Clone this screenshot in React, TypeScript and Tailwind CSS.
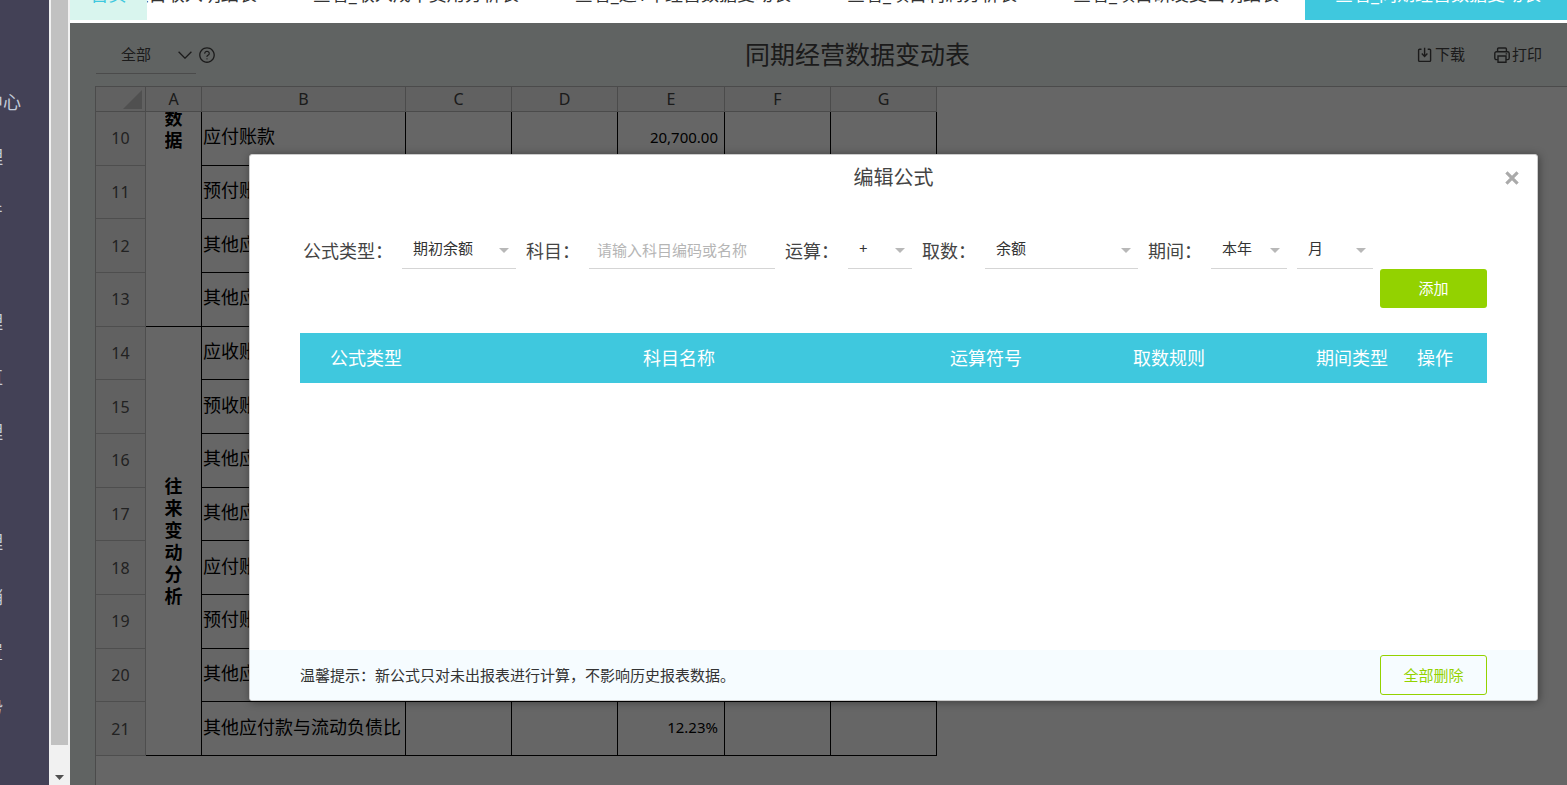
import { useState } from 'react';
import { AiOutlineQuestionCircle } from 'react-icons/ai';

const menuItems = ['中心', '理', '产', '', '理', '直', '理', '', '理', '销', '置', '势'];

const tabs = [
  '查看_项目收入明细表',
  '查看_收入成本费用分析表',
  '查看_近1年经营数据变动表',
  '查看_项目利润分析表',
  '查看_项目研发支出明细表',
  '查看_同期经营数据变动表'
];

const sheetColumns = ['A', 'B', 'C', 'D', 'E', 'F', 'G'];

interface SheetRow {
  no: number;
  label: string;
  value?: string;
}

const sheetRows: SheetRow[] = [
  { no: 10, label: '应付账款', value: '20,700.00' },
  { no: 11, label: '预付账款' },
  { no: 12, label: '其他应收款' },
  { no: 13, label: '其他应付款' },
  { no: 14, label: '应收账款' },
  { no: 15, label: '预收账款' },
  { no: 16, label: '其他应收款' },
  { no: 17, label: '其他应付款' },
  { no: 18, label: '应付账款' },
  { no: 19, label: '预付账款' },
  { no: 20, label: '其他应收款' },
  { no: 21, label: '其他应付款与流动负债比', value: '12.23%' }
];

const formulaColumns = [
  { title: '公式类型', className: 'w-[313px]' },
  { title: '科目名称', className: 'w-[307px]' },
  { title: '运算符号', className: 'w-[183px]' },
  { title: '取数规则', className: 'w-[183px]' },
  { title: '期间类型', className: 'w-[101px]' },
  { title: '操作', className: '' }
];

function DownloadIcon() {
  return (
    <svg className="h-4 w-4" viewBox="0 0 16 16" fill="none" stroke="currentColor" strokeWidth="1.4">
      <path d="M4.5 2.2H2.6a1 1 0 0 0-1 1v10.2a1 1 0 0 0 1 1h10a1 1 0 0 0 1-1V3.2a1 1 0 0 0-1-1h-1.9" />
      <path d="M7.6 0.8v8.6M4.8 6.6l2.8 2.8 2.8-2.8" />
    </svg>
  );
}

function PrinterIcon() {
  return (
    <svg className="h-4 w-4" viewBox="0 0 16 16" fill="none" stroke="currentColor" strokeWidth="1.4">
      <path d="M3.6 4.6V2a1 1 0 0 1 1-1h6.8a1 1 0 0 1 1 1v2.6" />
      <path d="M3.8 12.6H2.4a1.6 1.6 0 0 1-1.6-1.6V6.4a1.6 1.6 0 0 1 1.6-1.6h11.2a1.6 1.6 0 0 1 1.6 1.6V11a1.6 1.6 0 0 1-1.6 1.6h-1.4" />
      <path d="M4 9h8v6.2H4zM11.6 6.9h1.6" />
    </svg>
  );
}

interface FieldSelectProps {
  id: string;
  label: string;
  hideLabel?: boolean;
  widthClass: string;
  options: string[];
}

function FieldSelect({ id, label, hideLabel, widthClass, options }: FieldSelectProps) {
  const [value, setValue] = useState(options[0]);
  return (
    <div className="flex">
      <label htmlFor={id} className={hideLabel ? 'sr-only' : 'pt-1 pr-[9px] text-[18px] leading-[36px] text-[#444]'}>
        {label}：
      </label>
      <div className={`relative ${widthClass}`}>
        <select
          id={id}
          className="h-10 w-full appearance-none border-b border-[#d5d5d5] bg-transparent pl-[11px] text-[15px] text-[#333] outline-none"
          value={value}
          onChange={(e) => setValue(e.target.value)}
        >
          {options.map((o) => (
            <option key={o}>{o}</option>
          ))}
        </select>
        <svg className="pointer-events-none absolute top-[19px] right-[7px] h-[5px] w-[10px]" viewBox="0 0 10 5">
          <path d="M0 0h10L5 5z" fill="#b8b8b8" />
        </svg>
      </div>
    </div>
  );
}

function Sidebar() {
  return (
    <aside className="flex shrink-0">
      <nav className="w-[49px] overflow-hidden bg-[#434156] pt-[75px]">
        <ul className="-ml-[15px]">
          {menuItems.map((item, i) => (
            <li key={i} className="h-[55px] text-[18px] leading-[55px] whitespace-nowrap text-[#c3cddb]">
              {item && <a href="#">{item}</a>}
            </li>
          ))}
        </ul>
      </nav>
      <div className="flex w-[21px] flex-col items-center bg-[#f1f1f1]">
        <div className="w-[17px] flex-1 bg-[#c1c1c1]" />
        <div className="flex h-10 items-end pb-[5px]">
          <svg className="h-[5px] w-[9px]" viewBox="0 0 9 5">
            <path d="M0 0h9L4.5 5z" fill="#505050" />
          </svg>
        </div>
      </div>
    </aside>
  );
}

function TabBar() {
  return (
    <div className="flex h-[23px] items-end overflow-hidden bg-white pb-[3px] text-[18px]">
      <button type="button" className="h-[51px] w-[77px] shrink-0 bg-[#d9f5ee] text-[#3fc8de]">
        首页
      </button>
      <div className="flex min-w-0 flex-1 justify-end overflow-hidden">
        {tabs.map((tab, i) => (
          <button
            key={tab}
            type="button"
            className={`h-[51px] shrink-0 pr-[26px] pl-[30px] whitespace-nowrap ${
              i === tabs.length - 1 ? 'bg-[#3fc8de] text-white' : 'text-[#333]'
            }`}
          >
            {tab}
          </button>
        ))}
      </div>
    </div>
  );
}

function Toolbar() {
  return (
    <div className="flex h-[63px] shrink-0 items-center pr-[25px] pl-[26px] text-[#444]">
      <div className="relative w-[100px]">
        <select
          aria-label="报表范围"
          className="h-[38px] w-full appearance-none border-b border-[#bbb] bg-transparent pl-[25px] text-[15px] outline-none"
        >
          <option>全部</option>
        </select>
        <svg
          className="pointer-events-none absolute top-[15px] right-[4px] h-2 w-[14px]"
          viewBox="0 0 14 8"
          fill="none"
          stroke="currentColor"
          strokeWidth="1.3"
        >
          <path d="M0.6 0.8 7 7.2l6.4-6.4" />
        </svg>
      </div>
      <AiOutlineQuestionCircle className="ml-[2px] h-[18px] w-[18px]" />
      <h1 className="flex-1 pl-[82px] text-center text-[25px]">同期经营数据变动表</h1>
      <div className="flex gap-[29px] text-[15px]">
        <button type="button" className="flex items-center gap-[2px]">
          <DownloadIcon />
          下载
        </button>
        <button type="button" className="flex items-center gap-[2px]">
          <PrinterIcon />
          打印
        </button>
      </div>
    </div>
  );
}

function Sheet() {
  return (
    <div className="ml-[25px] min-h-0 flex-1 overflow-hidden border-t border-l border-[#bbb] bg-white">
      <table className="h-[669px] w-[841px] table-fixed border-separate border-spacing-0 text-black">
        <colgroup>
          <col className="w-[50px]" />
          <col className="w-[56px]" />
          <col className="w-[204px]" />
          <col className="w-[106px]" />
          <col className="w-[106px]" />
          <col className="w-[107px]" />
          <col className="w-[106px]" />
          <col className="w-[106px]" />
        </colgroup>
        <thead>
          <tr className="h-[25px] bg-[#f2f2f2] text-[16px] leading-[24px] text-[#444]">
            <th className="border-r border-b border-[#bbb] p-0">
              <svg className="mr-[3px] ml-auto h-[19px] w-[19px]" viewBox="0 0 19 19">
                <path d="M19 0v19H0z" fill="#c8c8c8" />
              </svg>
            </th>
            {sheetColumns.map((c) => (
              <th key={c} className="border-r border-b border-[#bbb] p-0 font-normal">
                {c}
              </th>
            ))}
          </tr>
        </thead>
        <tbody>
          {sheetRows.map((row) => (
            <tr key={row.no}>
              <th className="border-r border-b border-[#c4c4c4] bg-[#f2f2f2] p-0 text-[16px] font-normal text-[#555]">
                {row.no}
              </th>
              {row.no === 10 && (
                <td rowSpan={4} className="border-r border-b border-black p-0 align-top">
                  <div className="mx-auto flex h-[39px] w-[18px] items-end overflow-hidden text-[18px] leading-[22px] font-bold">
                    数据
                  </div>
                </td>
              )}
              {row.no === 14 && (
                <td rowSpan={8} className="border-r border-b border-black p-0">
                  <div className="mx-auto w-[18px] text-[18px] leading-[22px] font-bold">往来变动分析</div>
                </td>
              )}
              <td className="border-r border-b border-black p-0 pb-[3px] pl-px text-[18px] whitespace-nowrap">{row.label}</td>
              <td className="border-r border-b border-black p-0" />
              <td className="border-r border-b border-black p-0" />
              <td className="border-r border-b border-black p-0 pr-[6px] pb-[3px] text-right text-[15px]">{row.value}</td>
              <td className="border-r border-b border-black p-0" />
              <td className="border-r border-b border-black p-0" />
            </tr>
          ))}
        </tbody>
      </table>
    </div>
  );
}

function FormulaDialog() {
  const [subject, setSubject] = useState('');
  return (
    <div
      role="dialog"
      aria-labelledby="formula-title"
      className="mt-[131px] mr-[29px] ml-[179px] flex min-h-[547px] flex-col overflow-hidden rounded-[3px] border border-[#ccc] bg-white shadow-[1px_1px_8px_rgba(0,0,0,0.4)]"
    >
      <div className="grid h-[46px] grid-cols-[50px_1fr_50px] items-center">
        <span />
        <h2 id="formula-title" className="text-center text-[20px] text-[#444]">
          编辑公式
        </h2>
        <button type="button" aria-label="关闭" className="flex justify-center text-[#aaa]">
          <svg className="h-[14px] w-[14px]" viewBox="0 0 14 14" stroke="currentColor" strokeWidth="3.2">
            <path d="M1.4 1.4l11.2 11.2M12.6 1.4L1.4 12.6" />
          </svg>
        </button>
      </div>

      <div className="flex-1 px-[50px] pt-[28px]">
        <div className="flex gap-[10px] pl-[3px] whitespace-nowrap">
          <FieldSelect id="type" label="公式类型" widthClass="w-[114px]" options={['期初余额', '期末余额']} />
          <div className="flex">
            <label htmlFor="subject" className="pt-1 pr-[9px] text-[18px] leading-[36px] text-[#444]">
              科目：
            </label>
            <input
              id="subject"
              type="text"
              className="h-10 w-[186px] border-b border-[#d5d5d5] pt-[2px] pl-2 text-[15px] outline-none placeholder:text-[#b5b5b5]"
              placeholder="请输入科目编码或名称"
              value={subject}
              onChange={(e) => setSubject(e.target.value)}
            />
          </div>
          <FieldSelect id="operator" label="运算" widthClass="w-[64px]" options={['+', '-']} />
          <FieldSelect id="rule" label="取数" widthClass="w-[153px]" options={['余额', '发生额']} />
          <FieldSelect id="year" label="期间" widthClass="w-[76px]" options={['本年', '上年']} />
          <FieldSelect id="period" label="期间单位" hideLabel widthClass="w-[76px]" options={['月', '季']} />
        </div>
        <div className="flex justify-end">
          <button type="button" className="h-[39px] w-[107px] rounded-[3px] bg-[#93d200] text-[15px] text-white">
            添加
          </button>
        </div>
        <table className="mt-[25px] w-full table-fixed">
          <thead>
            <tr className="h-[50px] bg-[#3fc8de] text-left text-[18px] text-white">
              {formulaColumns.map((c) => (
                <th key={c.title} className={`p-0 pl-[30px] font-normal whitespace-nowrap ${c.className}`}>
                  {c.title}
                </th>
              ))}
            </tr>
          </thead>
        </table>
      </div>

      <div className="flex h-[50px] items-center justify-between bg-[#f6fcff] px-[50px] text-[15px]">
        <p className="text-[#333]">温馨提示：新公式只对未出报表进行计算，不影响历史报表数据。</p>
        <button type="button" className="h-10 w-[107px] rounded-[3px] border border-[#93d200] text-[#93d200]">
          全部删除
        </button>
      </div>
    </div>
  );
}

export default function App() {
  return (
    <div className="flex h-screen overflow-hidden font-['Noto_Sans','Noto_Sans_CJK_SC',sans-serif]">
      <Sidebar />
      <div className="flex min-w-0 flex-1 flex-col">
        <TabBar />
        <main className="relative flex min-h-0 flex-1 flex-col overflow-hidden bg-[#f1f7f4]">
          <Toolbar />
          <Sheet />
          <div className="absolute inset-0 bg-black/60">
            <FormulaDialog />
          </div>
        </main>
      </div>
    </div>
  );
}
